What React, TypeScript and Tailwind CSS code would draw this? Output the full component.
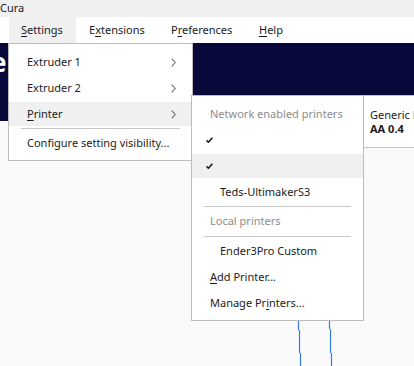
import React from "react";

const Chevron = () => (
  <svg width="5" height="9" viewBox="0 0 5 9" className="text-[#6b6b6b]">
    <path d="M0.7 0.7 L4.2 4.5 L0.7 8.3" fill="none" stroke="currentColor" strokeWidth="1.1" />
  </svg>
);

const Check = () => (
  <svg width="7" height="6" viewBox="0 0 7 6">
    <path d="M0.6 3.4 L2.4 5.2 L6.4 0.8" fill="none" stroke="#1b1b1b" strokeWidth="1.6" />
  </svg>
);

// a label with one underlined mnemonic letter
const Mn = ({ pre, key_, post }: { pre?: string; key_: string; post: string }) => (
  <span>
    {pre}
    <span className="underline underline-offset-2">{key_}</span>
    {post}
  </span>
);

const MenuRow = ({
  children,
  active,
  arrow,
  className = "",
}: {
  children: React.ReactNode;
  active?: boolean;
  arrow?: boolean;
  className?: string;
}) => (
  <div
    className={`flex h-[24px] items-center justify-between ${active ? "bg-[#f0f0f0]" : ""} ${className}`}
  >
    <div className="flex items-center">{children}</div>
    {arrow && (
      <div className="pr-[16px]">
        <Chevron />
      </div>
    )}
  </div>
);

export default function App() {
  return (
    <div className="relative h-[366px] w-[414px] overflow-hidden bg-[#fafafa] font-['Noto_Sans',sans-serif] text-[11px] text-[#1b1b1b]">
      {/* Title bar */}
      <div className="h-[17px] bg-[#f0f0f0] text-[11px] leading-[15px]">Cura</div>

      {/* Menu bar */}
      <div className="flex h-[26px] items-center bg-white">
        <div className="w-[9px]" />
        <div className="flex h-full w-[67px] items-center bg-[#f0f0f0] pl-[12px]">
          <Mn key_="S" post="ettings" />
        </div>
        <div className="w-[83px] pl-[13px]">
          <Mn pre="E" key_="x" post="tensions" />
        </div>
        <div className="w-[88px] pl-[12px]">
          <Mn pre="P" key_="r" post="eferences" />
        </div>
        <div className="pl-[12px]">
          <Mn key_="H" post="elp" />
        </div>
      </div>

      {/* Header band */}
      <div className="relative h-[78px] overflow-hidden bg-[#08083b]">
        <span className="absolute left-[-9px] top-[2px] text-[26px] font-bold leading-[34px] text-white">e</span>
      </div>

      {/* Print setup header on the right */}
      <div className="absolute left-[363px] top-[95px] h-[53px] w-[80px] border border-[#c4c4c4] bg-white pl-[6px] pt-[12px] leading-[14px]">
        <div className="whitespace-nowrap">Generic PLA</div>
        <div className="whitespace-nowrap font-bold">AA 0.4</div>
      </div>

      {/* Build plate edges */}
      <svg className="absolute left-[290px] top-[320px]" width="50" height="46" viewBox="0 0 50 46">
        <path d="M8.5 0 V10 M9.5 10 V33 M10.5 33 V46" stroke="#2f7cf0" strokeWidth="1.2" fill="none" />
        <path d="M39.5 0 V9 M40.5 9 V33 M41.5 33 V46" stroke="#2f7cf0" strokeWidth="1.2" fill="none" />
      </svg>

      {/* Settings menu */}
      <div className="absolute left-[8px] top-[43px] w-[185px] border border-[#bdbdbd] bg-white pb-[5px] pt-[6px]">
        <MenuRow arrow className="pl-[18px]">Extruder 1</MenuRow>
        <MenuRow arrow className="mt-[2px] pl-[18px]">Extruder 2</MenuRow>
        <MenuRow arrow active className="mt-[2px] pl-[18px]">
          <Mn key_="P" post="rinter" />
        </MenuRow>
        <div className="mx-[12px] mt-[2px] h-px bg-[#c8c8c8]" />
        <MenuRow className="mt-[2px] pl-[18px]">Configure setting visibility...</MenuRow>
      </div>

      {/* Printer submenu */}
      <div className="absolute left-[191px] top-[95px] w-[173px] border border-[#bdbdbd] bg-white pb-[5px] pt-[6px]">
        <MenuRow className="pl-[18px] text-[#8c8c8c]">Network enabled printers</MenuRow>
        <MenuRow className="mt-[2px] pl-[14px]">
          <Check />
        </MenuRow>
        <MenuRow active className="mt-[2px] pl-[14px]">
          <Check />
        </MenuRow>
        <MenuRow className="mt-[2px] pl-[28px]">Teds-UltimakerS3</MenuRow>
        <div className="mx-[12px] mt-[2px] h-px bg-[#c8c8c8]" />
        <MenuRow className="mt-[2px] pl-[18px] text-[#8c8c8c]">Local printers</MenuRow>
        <div className="mx-[12px] mt-[3px] h-px bg-[#c8c8c8]" />
        <MenuRow className="mt-[2px] pl-[28px]">Ender3Pro Custom</MenuRow>
        <MenuRow className="mt-[2px] pl-[18px]">
          <Mn key_="A" post="dd Printer..." />
        </MenuRow>
        <MenuRow className="mt-[2px] pl-[18px]">
          <Mn pre="Manage Pr" key_="i" post="nters..." />
        </MenuRow>
      </div>
    </div>
  );
}
